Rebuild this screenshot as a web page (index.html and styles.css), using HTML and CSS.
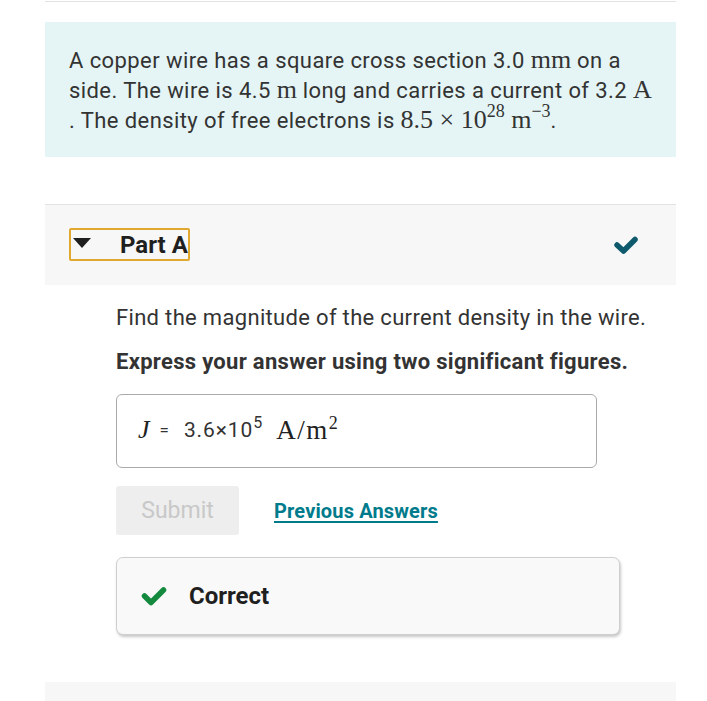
FILE: index.html
```html
<!DOCTYPE html>
<html>
<head>
<meta charset="utf-8">
<link rel="stylesheet" href="styles.css">
</head>
<body>
<div class="page">
  <div class="topline"></div>
  <div class="problem">
    <p>A copper wire has a square cross section 3.0 <span class="m">mm</span> on a side. The wire is 4.5 <span class="m">m</span> long and carries a current of 3.2 <span class="m">A</span> . The density of free electrons is <span class="m">8.5 × 10<sup>28</sup> m<sup>−3</sup></span>.</p>
  </div>
  <div class="part">
    <div class="part-head">
      <button class="toggle"><span class="tri"></span><span class="part-title">Part A</span></button>
      <svg class="done" width="24" height="18" viewBox="0 0 24 18"><path d="M3 9 L9.5 15 L21 3.5" fill="none" stroke="#0e5a6c" stroke-width="5.5" stroke-linecap="round" stroke-linejoin="round"/></svg>
    </div>
    <div class="part-body">
      <p class="q">Find the magnitude of the current density in the wire.</p>
      <p class="instr">Express your answer using two significant figures.</p>
      <div class="answer">
        <span class="var">J</span><span class="eq">=</span><span class="val">3.6×10<sup>5</sup></span><span class="unit">A/m<sup>2</sup></span>
      </div>
      <div class="actions">
        <button class="submit">Submit</button>
        <a class="prev" href="#">Previous Answers</a>
      </div>
      <div class="feedback">
        <svg width="26" height="20" viewBox="0 0 26 20"><path d="M3.5 10 L10 16.5 L22.5 4" fill="none" stroke="#138a3e" stroke-width="5.5" stroke-linecap="round" stroke-linejoin="round"/></svg>
        <span>Correct</span>
      </div>
    </div>
  </div>
  <div class="next"></div>
</div>
</body>
</html>
```
FILE: styles.css
```css
html, body { margin: 0; padding: 0; background: #fff; }
body { font-family: Roboto, "Liberation Sans", sans-serif; color: #333; }
.page { margin: 0 31px 0 45px; }
.topline { height: 1px; background: #e2e2e2; margin-top: 1px; }
.problem { background: #e5f5f5; margin-top: 20px; padding: 24px 21px 21px 24px; }
.problem p { margin: 0; font-size: 22px; letter-spacing: 0.42px; line-height: 30px; color: #333; }
.m { font-family: "Liberation Serif", "DejaVu Serif", serif; font-size: 26px; letter-spacing: 0; line-height: 0; }
.m sup { font-size: 18px; line-height: 0; position: relative; top: -1px; }
.part { margin-top: 47px; }
.part-head { background: #f7f7f7; border-top: 1px solid #e2e2e2; height: 80px; display: flex; align-items: center; justify-content: space-between; padding: 0 38px 0 24px; }
.toggle { display: flex; align-items: center; background: transparent; border: 2px solid #e0a82e; border-radius: 2px; padding: 0 0 0 2px; height: 33px; width: 121px; margin-top: -1px; font: inherit; cursor: pointer; overflow: hidden; }
.tri { flex: none; width: 0; height: 0; border-left: 9px solid transparent; border-right: 9px solid transparent; border-top: 10px solid #1f1f1f; margin-right: 29px; margin-top: -3px; }
.part-title { font-weight: 700; font-size: 24px; color: #1f1f1f; white-space: nowrap; }
.part-body { padding: 18px 0 0 71px; }
.q { margin: 0; font-size: 22px; letter-spacing: 0.32px; line-height: 30px; color: #333; }
.instr { margin: 14px 0 0; font-size: 22px; letter-spacing: 0.3px; font-weight: 700; line-height: 30px; color: #333; }
.answer { margin-top: 17px; border: 1px solid #aaa; border-radius: 6px; display: flex; align-items: center; padding-left: 21px; box-sizing: border-box; width: 481px; height: 74px; padding-bottom: 2px; }
.var { font-family: "Liberation Serif", serif; font-style: italic; font-size: 26px; color: #222; }
.eq { font-size: 17px; margin: 0 15px 0 10px; color: #333; }
.val { font-size: 21px; letter-spacing: 0.9px; color: #333; }
.val sup { font-size: 16px; line-height: 0; position: relative; top: -1px; }
.unit { font-family: "Liberation Serif", serif; font-size: 27px; letter-spacing: 1.5px; color: #222; margin-left: 13px; }
.unit sup { font-size: 18px; line-height: 0; }
.actions { display: flex; align-items: center; margin-top: 18px; }
.submit { width: 123px; height: 49px; background: #eee; border: none; border-radius: 3px; color: #c8c8c8; font: inherit; font-size: 23px; }
.prev { margin-left: 35px; color: #007b8c; font-weight: 700; font-size: 20px; letter-spacing: 0.15px; text-decoration: underline; text-underline-offset: 3px; }
.feedback { margin-top: 22px; width: 504px; height: 78px; box-sizing: border-box; background: #f9f9f9; border: 1px solid #cfcfcf; border-radius: 7px; box-shadow: 1px 2px 3px rgba(0,0,0,0.22); display: flex; align-items: center; padding-left: 24px; }
.feedback span { margin-left: 22px; font-size: 24px; font-weight: 700; color: #1f1f1f; }
.next { margin-top: 47px; height: 20px; background: #f7f7f7; }
```
